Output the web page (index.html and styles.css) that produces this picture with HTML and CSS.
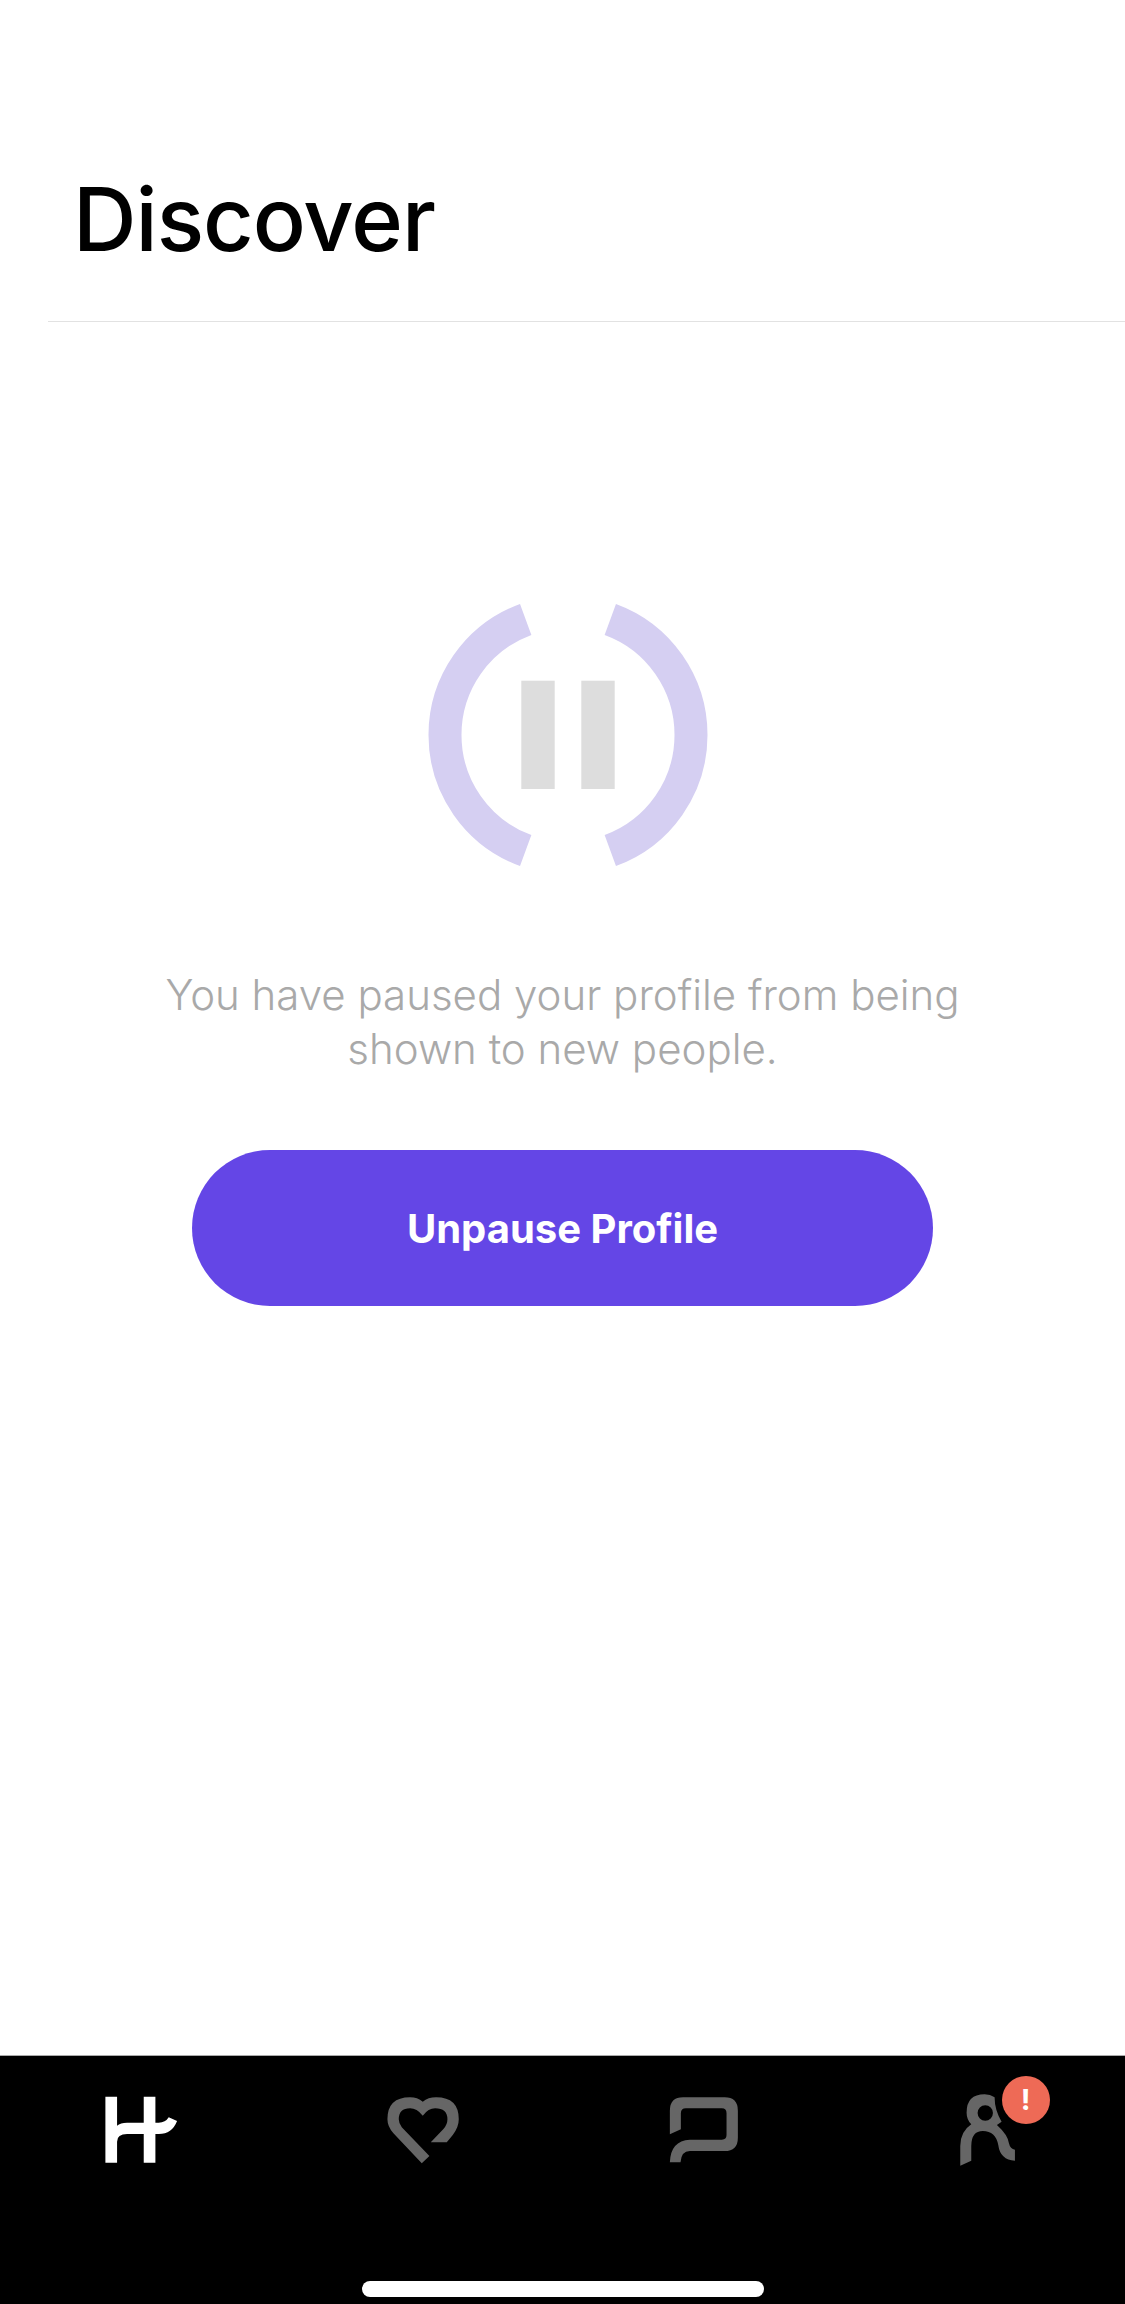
FILE: index.html
```html
<!DOCTYPE html>
<html lang="en">
<head>
<meta charset="utf-8">
<title>Discover</title>
<link rel="stylesheet" href="styles.css">
</head>
<body>
<div class="page">
  <header class="header">
    <h1 class="title">Discover</h1>
    <div class="divider"></div>
  </header>
  <main class="main">
    <svg class="pause" viewBox="0 0 300 300" aria-hidden="true">
      <g class="pause-ring">
        <path d="M111.7 34.5A123 123 0 0 0 111.7 265.5"/>
        <path d="M196.3 34.5A123 123 0 0 1 196.3 265.5"/>
      </g>
      <rect class="pause-bar" x="107.3" y="95.7" width="33.4" height="108.3"/>
      <rect class="pause-bar" x="167.3" y="95.7" width="33.4" height="108.3"/>
    </svg>
    <p class="message">You have paused your profile from being<br>shown to new people.</p>
    <button class="cta">Unpause Profile</button>
  </main>
  <nav class="nav">
    <div class="tabs">
      <div class="tab">
        <svg class="icon icon-active" viewBox="121.8 90 240 240"><path d="M135 110H170V197Q180 188 200 188H250V110H285V188H295Q315 188 325 172L350 183Q335 222 295 222H285V308H250V222H200Q170 222 170 245V308H135Z"/></svg>
      </div>
      <div class="tab">
        <svg class="icon" viewBox="65.7 60 240 240"><path d="M185 280L100 190Q82 170 82 148Q82 82 150 82Q172 82 188 95Q204 82 228 82Q296 82 296 148Q296 172 278 195L260 217H212L250 177Q262 164 262 148Q262 115 225 115Q205 115 188 137Q170 115 150 115Q116 115 116 148Q116 160 125 172L208 258Z"/></svg>
      </div>
      <div class="tab">
        <svg class="icon" viewBox="39.4 60 240 240"><path d="M60 193V122Q60 82 100 82H224Q264 82 264 122V203Q264 243 224 243H120Q94 243 92 277H60Q62 212 120 209H216Q230 209 230 195V130Q230 115 216 115H108Q93 115 93 130V178Z"/></svg>
      </div>
      <div class="tab tab-badged">
        <svg class="icon" viewBox="13.2 90 240 240"><path fill-rule="evenodd" d="M62 317V258Q62 215 95 193Q81 178 81 158Q81 103 135 103Q152 103 165 112Q165 150 186 185L172 195Q205 225 208 250Q212 268 226 269V302Q182 300 176 255Q168 213 130 213Q95 213 95 258V302ZM137 136A23 23 0 1 0 137.01 182A23 23 0 1 0 137 136Z"/></svg>
        <span class="badge">!</span>
      </div>
    </div>
    <div class="home-bar"></div>
  </nav>
</div>
</body>
</html>
```
FILE: styles.css
```css
* { box-sizing: border-box; }
html, body { margin: 0; padding: 0; background: #fff; }
.page {
  width: 1125px;
  height: 2304px;
  display: flex;
  flex-direction: column;
  font-family: "Inter", "Liberation Sans", sans-serif;
}
.header { padding-top: 164px; }
.title {
  margin: 0;
  padding-left: 73px;
  font-size: 88px;
  line-height: 110px;
  font-weight: 500;
  letter-spacing: -1px;
  color: #000;
}
.divider {
  margin: 47px 0 0 48px;
  height: 1px;
  background: #e2e2e2;
}
.main {
  flex: 1;
  display: flex;
  flex-direction: column;
  align-items: center;
  padding-top: 263px;
}
.pause { width: 300px; height: 300px; display: block; margin-left: 3px; }
.pause-ring path { fill: none; stroke: #d5cff2; stroke-width: 33; }
.pause-bar { fill: #ddd; }
.message {
  margin: 83px 0 0;
  text-align: center;
  font-size: 42px;
  line-height: 54px;
  font-weight: 300;
  color: #a9a9a9;
}
.cta {
  margin-top: 74px;
  width: 741px;
  height: 156px;
  border: 0;
  border-radius: 78px;
  background: #6446e6;
  color: #fff;
  font-family: inherit;
  font-size: 40px;
  font-weight: 700;
}
.nav {
  height: 249px;
  background: #000;
  border-top: 1px solid #aaa;
  display: flex;
  flex-direction: column;
  align-items: center;
}
.tabs {
  width: 100%;
  display: grid;
  grid-template-columns: repeat(4, 1fr);
  padding-top: 34px;
}
.tab { position: relative; display: flex; justify-content: center; }
.icon { width: 80px; height: 80px; display: block; fill: #666; }
.icon-active { fill: #fff; }
.badge {
  position: absolute;
  left: 158px;
  top: -14px;
  width: 48px;
  height: 48px;
  border-radius: 50%;
  background: #ee6a56;
  color: #fff;
  font-size: 29px;
  font-weight: 700;
  line-height: 48px;
  text-align: center;
}
.home-bar {
  margin-top: 111px;
  width: 402px;
  height: 16px;
  border-radius: 8px;
  background: #fff;
}
```
